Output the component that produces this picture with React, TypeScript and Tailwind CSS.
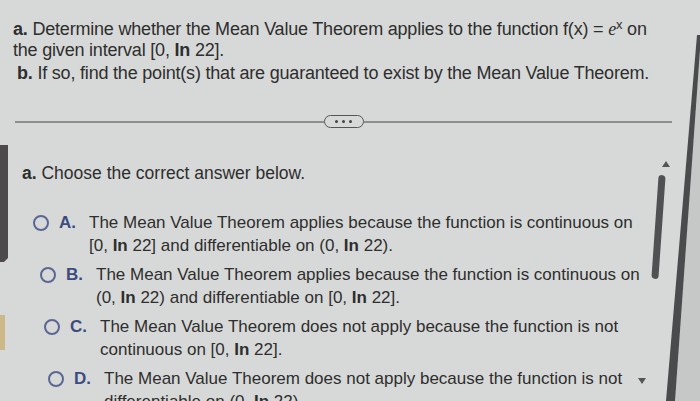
import React from 'react';

const options = [
  {
    key: 'A',
    indent: 'ml-[11px]',
    line1: <>The Mean Value Theorem applies because the function is continuous on</>,
    line2: <>[0, <b>In</b> 22] and differentiable on (0, <b>In</b> 22).</>,
  },
  {
    key: 'B',
    indent: 'ml-[18px]',
    line1: <>The Mean Value Theorem applies because the function is continuous on</>,
    line2: <>(0, <b>In</b> 22) and differentiable on [0, <b>In</b> 22].</>,
  },
  {
    key: 'C',
    indent: 'ml-[22px]',
    line1: <>The Mean Value Theorem does not apply because the function is not</>,
    line2: <>continuous on [0, <b>In</b> 22].</>,
  },
  {
    key: 'D',
    indent: 'ml-[26px]',
    line1: <>The Mean Value Theorem does not apply because the function is not</>,
    line2: <>differentiable on (0, <b>In</b> 22).</>,
  },
];

function Radio() {
  return <span className="mt-[4px] h-[16px] w-[16px] shrink-0 rounded-full border-2 border-[#5a6794]" />;
}

export default function App() {
  return (
    <div
      className="relative h-[401px] w-[700px] overflow-hidden bg-[#d7d9d8] text-[#2e2e2e]"
      style={{ fontFamily: '"Liberation Sans", Arial, sans-serif' }}
    >
      {/* question */}
      <div className="pl-[13px] pt-[19px] text-[18px] leading-[21px] tracking-[-0.2px]">
        <p>
          <b>a.</b> Determine whether the Mean Value Theorem applies to the function f(x) ={' '}
          <i style={{ fontFamily: '"Liberation Serif", serif' }}>e</i>
          <sup className="text-[13px]">x</sup> on
        </p>
        <p>
          the given interval [0, <b>In</b> 22].
        </p>
        <p className="mt-[2px] pl-[4px]">
          <b>b.</b> If so, find the point(s) that are guaranteed to exist by the Mean Value Theorem.
        </p>
      </div>

      {/* divider */}
      <div className="mt-[31px] ml-[15px] flex w-[657px] items-center">
        <div className="h-[2px] flex-1 bg-[#8d8f8e]" />
        <div className="flex h-[13px] w-[40px] items-center justify-center gap-[4px] rounded-full border-[1.5px] border-[#555]">
          <span className="h-[3px] w-[3px] rounded-full bg-[#444]" />
          <span className="h-[3px] w-[3px] rounded-full bg-[#444]" />
          <span className="h-[3px] w-[3px] rounded-full bg-[#444]" />
        </div>
        <div className="h-[2px] flex-1 bg-[#8d8f8e]" />
      </div>

      {/* answers */}
      <div className="flex">
        <div className="flex-1 pl-[22px] pt-[34px] text-[17px] leading-[23px]">
          <p className="text-[17.5px]">
            <b>a.</b> Choose the correct answer below.
          </p>
          <div className="mt-[26px] flex flex-col gap-[6px]">
            {options.map((o) => (
              <div key={o.key} className={`flex items-start ${o.indent}`}>
                <Radio />
                <span className="ml-[10px] w-[30px] shrink-0 font-bold text-[#3d4c7e]">{o.key}.</span>
                <div>
                  <p>{o.line1}</p>
                  <p>{o.line2}</p>
                </div>
              </div>
            ))}
          </div>
        </div>
        {/* scrollbar */}
        <div className="relative w-[48px]">
          <div className="absolute left-[10px] top-[33px] h-0 w-0 border-x-[4px] border-b-[6px] border-x-transparent border-b-[#555]" />
          <div className="absolute left-[3px] top-[47px] h-[104px] w-[7px] rotate-[4deg] rounded-full bg-[#505152]" />
          <div className="absolute left-[-14px] top-[250px] h-0 w-0 border-x-[4px] border-t-[6px] border-x-transparent border-t-[#555]" />
        </div>
      </div>

      {/* screen bezel edges */}
      <svg className="pointer-events-none absolute inset-0" width="700" height="401" viewBox="0 0 700 401">
        <polygon points="700,50 700,401 675,401" fill="#c6c8c7" />
        <polygon points="697,35 700,35 700,50 675,401 666,401" fill="#4a4b4d" />
        <polygon points="0,145 8,145 8,258 4,262 0,262" fill="#4c4a4a" />
        <polygon points="0,315 5,315 5,350 0,350" fill="#cdb987" />
      </svg>
    </div>
  );
}
